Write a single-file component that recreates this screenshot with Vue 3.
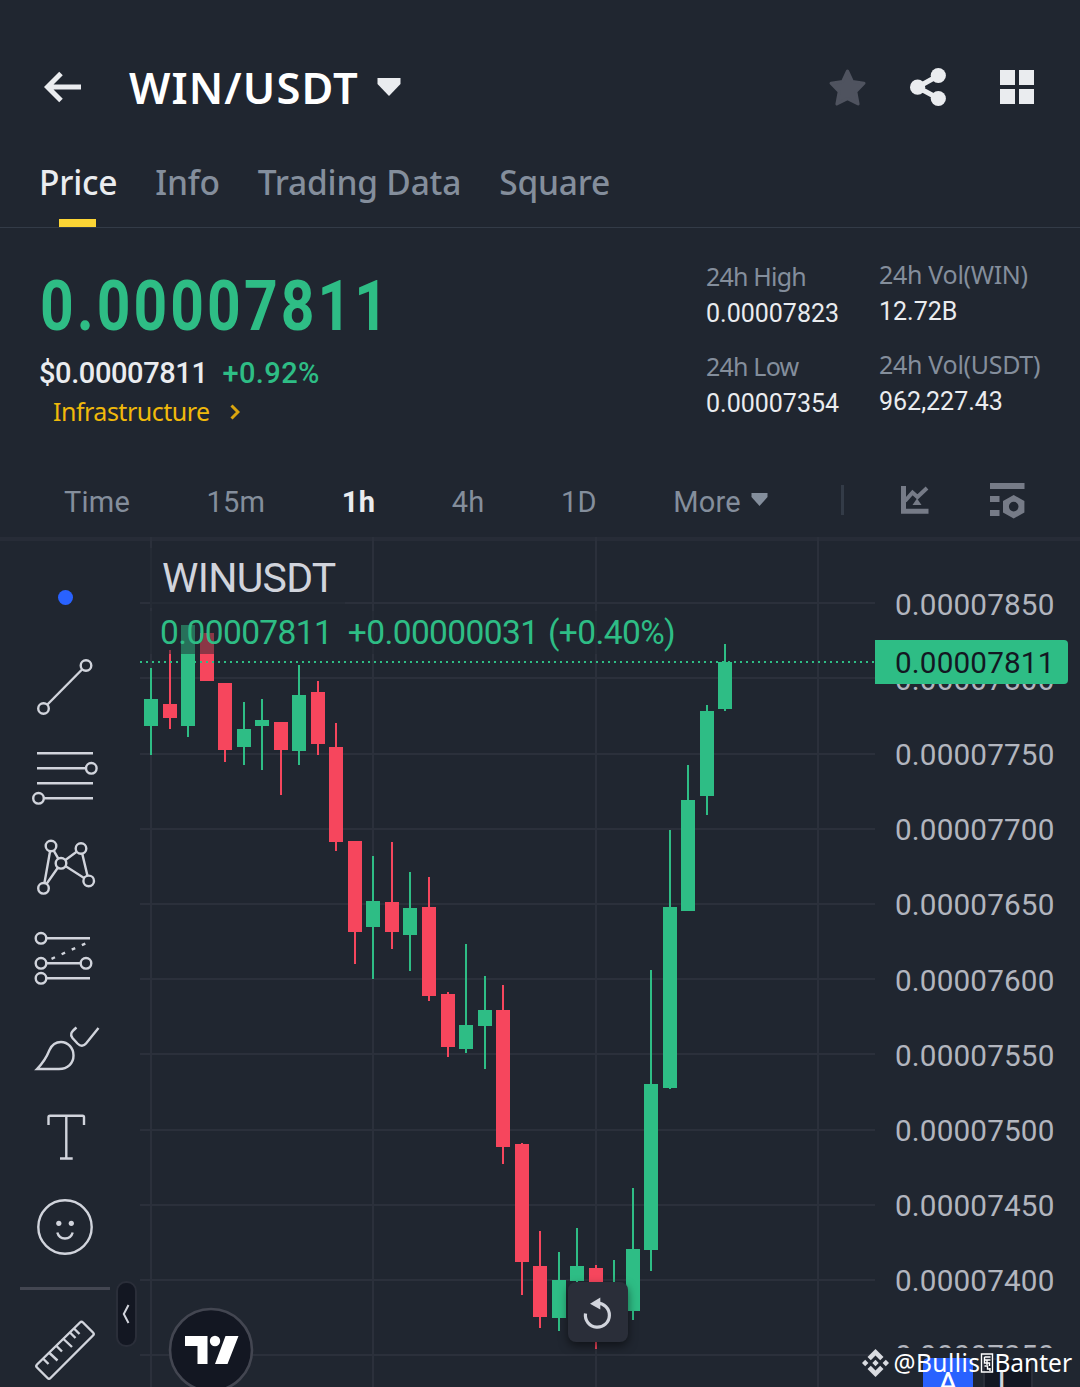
<template>
  <div class="screen">
    <header class="header">
      <svg class="back" width="38" height="32" viewBox="0 0 38 32">
        <path d="M17 2.5L3.5 16L17 29.5M4 16H37" fill="none" stroke="#eaecef" stroke-width="5" />
      </svg>
      <h1 class="pair">WIN/USDT</h1>
      <svg class="pair-caret" width="24" height="18" viewBox="0 0 24 18">
        <path d="M0.5 0H23.5V6L12 18L0.5 6Z" fill="#eaecef" />
      </svg>
      <div class="header-actions">
        <svg width="38" height="40" viewBox="0 0 38 40">
          <path d="M19.5 4L24.5 14.6L36 16.2L27.8 24.6L30.1 37L19.5 31.6L8.9 37L11.2 24.6L3 16.2L14.5 14.6Z" fill="#4f535f" stroke="#4f535f" stroke-width="3" stroke-linejoin="round" />
        </svg>
        <svg width="38" height="40" viewBox="0 0 38 40">
          <path d="M29.5 8.5L8.5 20.2L29.5 31.5" fill="none" stroke="#eaecef" stroke-width="5" />
          <circle cx="29.3" cy="8.5" r="7.6" fill="#eaecef" />
          <circle cx="8.6" cy="20.2" r="7.6" fill="#eaecef" />
          <circle cx="29.3" cy="31.5" r="7.6" fill="#eaecef" />
        </svg>
        <svg width="34" height="34" viewBox="0 0 34 34">
          <path d="M0 0H15V15H0ZM19 0H34V15H19ZM0 19H15V34H0ZM19 19H34V34H19Z" fill="#eaecef" />
        </svg>
      </div>
    </header>

    <nav class="tabs">
      <span v-for="tab in tabs" :key="tab" class="tab" :class="{ active: tab === activeTab }">{{ tab }}</span>
    </nav>

    <section class="summary">
      <div class="price-block">
        <div class="last-price">0.00007811</div>
        <div class="fiat-row">
          <span class="fiat">$0.00007811</span>
          <span class="change">+0.92%</span>
        </div>
        <div class="category">
          <span>Infrastructure</span>
          <svg width="10" height="16" viewBox="0 0 10 16">
            <path d="M1.5 1.5L8 8L1.5 14.5" fill="none" stroke="#dba60e" stroke-width="3" />
          </svg>
        </div>
      </div>
      <div class="stats">
        <div v-for="(column, i) in stats" :key="i" class="stats-column">
          <div v-for="stat in column" :key="stat.label" class="stat">
            <div class="stat-label">{{ stat.label }}</div>
            <div class="stat-value">{{ stat.value }}</div>
          </div>
        </div>
      </div>
    </section>

    <div class="intervals">
      <span v-for="item in intervals" :key="item" class="interval" :class="{ active: item === activeInterval }">{{ item }}</span>
      <span class="interval more">
        More
        <svg width="17" height="13" viewBox="0 0 17 13">
          <path d="M0.5 0H16.5V4L8.5 13L0.5 4Z" fill="#848e9c" />
        </svg>
      </span>
      <span class="separator"></span>
      <svg class="icon-indicator" width="28" height="28" viewBox="0 0 28 28">
        <path d="M2.5 0V25.3H27.5" fill="none" stroke="#767b87" stroke-width="5" />
        <path d="M4 15L11.5 6.5L16.5 11L26 2" fill="none" stroke="#767b87" stroke-width="4" />
        <path d="M16 12.5L20.5 19H11.5Z" fill="#767b87" />
      </svg>
      <svg class="icon-settings" width="35" height="36" viewBox="0 0 35 36">
        <path d="M0 0H34.5V6H0ZM0 13H9.5V19H0ZM0 27H9.5V33H0Z" fill="#767b87" />
        <path fill-rule="evenodd" d="M23.7 12L34.4 18V29.5L23.7 35.5L13 29.5V18ZM23.7 18.8A4.8 4.8 0 1 0 23.7 28.4A4.8 4.8 0 1 0 23.7 18.8Z" fill="#767b87" />
      </svg>
    </div>

    <main class="chart">
      <aside class="toolbar">
        <span class="dot"></span>
        <svg class="tool" viewBox="0 0 90 90">
          <path d="M23.5 66.5L66 23.5" />
          <circle cx="23.5" cy="66.5" r="5.3" />
          <circle cx="66" cy="23.5" r="5.3" />
        </svg>
        <svg class="tool" viewBox="0 0 90 90">
          <path d="M17 21.3H73M17 36.3H73M17 51.3H73M17 66.3H73" />
          <circle cx="71.3" cy="36.3" r="5.3" />
          <circle cx="18.5" cy="66.3" r="5.3" />
        </svg>
        <svg class="tool" viewBox="0 0 90 90">
          <path d="M31 24L23.5 66.3L41 41.3ZM41 41.3L61 26.5L68.7 59Z" />
          <circle cx="31" cy="24" r="5.3" />
          <circle cx="61" cy="26.5" r="5.3" />
          <circle cx="41" cy="41.3" r="5.3" />
          <circle cx="23.5" cy="66.3" r="5.3" />
          <circle cx="68.7" cy="58.9" r="5.3" />
        </svg>
        <svg class="tool" viewBox="0 0 90 90">
          <path d="M21 26.3H70M21 51.3H66M21 66.3H70" />
          <path d="M31.5 46.8L66.5 31" stroke-dasharray="3.8 7.3" />
          <circle cx="21" cy="26.3" r="5.3" />
          <circle cx="21" cy="51.3" r="5.3" />
          <circle cx="66" cy="51.3" r="5.3" />
          <circle cx="21" cy="66.3" r="5.3" />
        </svg>
        <svg class="tool" viewBox="0 0 90 90">
          <path d="M17 67C24 60 27.5 53 29.5 48C32 42.5 35.5 40 41 40C48 40 53.5 46 53.5 53.5C53.5 61 48 67 39 67Z" />
          <path d="M56.5 25.5C50.5 30.5 50 32.5 52.5 36L57.5 41.5C60.5 44.5 63.5 44.5 66 41.5L78.5 26" />
        </svg>
        <svg class="tool" viewBox="0 0 90 90">
          <path d="M28.5 33V25.2Q28.5 23.7 30 23.7H62.5Q64 23.7 64 25.2V33M46.3 23.7V66.5M40 66.5H52.7" />
        </svg>
        <svg class="tool" viewBox="0 0 90 90">
          <circle cx="45" cy="45" r="26.7" />
          <circle class="solid" cx="38.8" cy="41.3" r="2.6" />
          <circle class="solid" cx="51.3" cy="41.3" r="2.6" />
          <path d="M37.3 50.5C39.5 58.5 50.5 58.5 52.7 50.5" />
        </svg>
        <div class="toolbar-divider"></div>
        <svg class="tool" viewBox="0 0 90 90">
          <path d="M60 17.5Q61.5 16 63 17.5L73 27.5Q74.5 29 73 30.5L30.5 73Q29 74.5 27.5 73L17 62.5Q15.5 61 17 59.5Z" stroke-linejoin="round" />
          <path d="M23.5 54L28.5 59M29.5 48L37.5 55.5M36.5 41L42 46.5M43.5 34L52 42M50 27.5L55.5 33M54 23.5L59.5 29" />
        </svg>
        <button class="collapse">
          <svg width="8" height="20" viewBox="0 0 8 20">
            <path d="M6.5 1L1.8 10L6.5 19" fill="none" stroke="#d1d4dc" stroke-width="2" />
          </svg>
        </button>
      </aside>

      <div class="plot">
        <svg class="plot-svg" viewBox="140 541 735 846" width="735" height="846">
          <g stroke="#2b303b" stroke-width="2">
            <line v-for="x in gridX" :key="x" :x1="x" :x2="x" y1="537" y2="1387" />
            <line v-for="label in priceLabels" :key="label.y" x1="140" x2="875" :y1="label.y" :y2="label.y" />
          </g>
          <g v-for="candle in candles" :key="candle.x" :fill="candle.up ? '#2ebd85' : '#f6465d'">
            <rect :x="candle.x - 1" :y="candle.high" width="2" :height="candle.low - candle.high" />
            <rect :x="candle.x - 7" :y="candle.top" width="14" :height="candle.bottom - candle.top" />
          </g>
          <g fill="#202630" fill-opacity="0.5">
            <rect x="150" y="548" width="195" height="60" />
            <rect x="150" y="611" width="534" height="43" />
          </g>
          <line x1="140" x2="875" y1="662" y2="662" stroke="#2ebd85" stroke-width="2" stroke-dasharray="2 4" />
        </svg>
        <div class="legend">
          <div class="symbol">WINUSDT</div>
          <div class="legend-values">
            <span>0.00007811</span>
            <span>+0.00000031</span>
            <span>(+0.40%)</span>
          </div>
        </div>
        <svg class="tv-logo" width="86" height="86" viewBox="0 0 86 86">
          <circle cx="43" cy="43" r="41" fill="#131722" stroke="#434651" stroke-width="2.6" />
          <path d="M17 29H39.5V57H29.5V39H17ZM57.5 29H70.5L59.5 57H47Z" fill="#fff" />
          <circle cx="47" cy="34" r="5.2" fill="#fff" />
        </svg>
        <button class="reset">
          <svg width="60" height="60" viewBox="0 0 60 60">
            <path d="M17.5 31.5A12 12 0 1 0 29 21.2" fill="none" stroke="#d1d4dc" stroke-width="3.2" />
            <path d="M22 21.8L32.3 15.5V27.5Z" fill="#d1d4dc" />
          </svg>
        </button>
      </div>

      <div class="axis">
        <div class="axis-labels">
          <span v-for="label in priceLabels" :key="label.text" class="axis-label">{{ label.text }}</span>
        </div>
        <span class="current-price">0.00007811</span>
        <div class="axis-footer">
          <span class="scale-button auto">A</span>
          <span class="scale-button">L</span>
        </div>
      </div>

      <div class="watermark">
        <svg width="27" height="28" viewBox="0 0 27 28">
          <path d="M13.5 0L21.5 8L18.2 11.3L13.5 6.6L8.8 11.3L5.5 8ZM13.5 28L5.5 20L8.8 16.7L13.5 21.4L18.2 16.7L21.5 20ZM13.5 10.8L16.7 14L13.5 17.2L10.3 14ZM3.2 10.8L6.4 14L3.2 17.2L0 14ZM23.8 10.8L27 14L23.8 17.2L20.6 14Z" fill="#d9dbe0" />
        </svg>
        <span class="handle">@Bullis</span>
        <svg class="missing-glyph" width="14" height="20" viewBox="0 0 14 20">
          <path d="M1.5 1H12.5V19H1.5ZM4.5 4H10.5M4.5 7H10.5M4.5 4V10H9.5V13M4.5 13H7.5V16H10.5M7 7V12M10 15V18" fill="none" stroke="#fff" stroke-width="1.4" />
        </svg>
        <span>Banter</span>
      </div>
    </main>
  </div>
</template>

<script setup>
const tabs = ['Price', 'Info', 'Trading Data', 'Square']
const activeTab = 'Price'

const intervals = ['Time', '15m', '1h', '4h', '1D']
const activeInterval = '1h'

const stats = [
  [
    { label: '24h High', value: '0.00007823' },
    { label: '24h Low', value: '0.00007354' }
  ],
  [
    { label: '24h Vol(WIN)', value: '12.72B' },
    { label: '24h Vol(USDT)', value: '962,227.43' }
  ]
]

const gridX = [151, 373, 596, 818]

const priceLabels = Array.from({ length: 11 }, (_, i) => ({
  text: `0.0000${7850 - i * 50}`,
  y: Math.round(603.3 + i * 75.18)
}))

// x, direction, high, body top, body bottom, low
const candles = [
  [151, 1, 668, 699, 726, 755],
  [170, 0, 650, 704, 718, 729],
  [188, 1, 625, 625, 726, 737],
  [207, 0, 633, 633, 681, 681],
  [225, 0, 683, 683, 750, 762],
  [244, 1, 702, 729, 747, 765],
  [262, 1, 699, 720, 726, 770],
  [281, 0, 722, 722, 750, 795],
  [299, 1, 665, 695, 751, 765],
  [318, 0, 681, 692, 744, 755],
  [336, 0, 723, 747, 842, 851],
  [355, 0, 841, 841, 932, 964],
  [373, 1, 856, 901, 927, 979],
  [392, 0, 842, 902, 932, 949],
  [410, 1, 872, 908, 935, 971],
  [429, 0, 877, 907, 996, 1001],
  [448, 0, 992, 994, 1047, 1057],
  [466, 1, 944, 1025, 1049, 1053],
  [485, 1, 976, 1010, 1026, 1069],
  [503, 0, 985, 1010, 1147, 1164],
  [522, 0, 1143, 1144, 1262, 1295],
  [540, 0, 1231, 1266, 1317, 1328],
  [559, 1, 1252, 1280, 1318, 1331],
  [577, 1, 1228, 1266, 1281, 1283],
  [596, 0, 1265, 1268, 1310, 1349],
  [614, 1, 1260, 1290, 1310, 1320],
  [633, 1, 1188, 1249, 1311, 1320],
  [651, 1, 970, 1084, 1250, 1271],
  [670, 1, 830, 907, 1088, 1089],
  [688, 1, 765, 800, 911, 911],
  [707, 1, 705, 711, 796, 815],
  [725, 1, 644, 662, 709, 711]
].map(([x, up, high, top, bottom, low]) => ({ x, up, high, top, bottom, low }))
</script>

<style>
body {
  background: #202630;
}
</style>

<style scoped>
.screen {
  width: 1080px;
  height: 1387px;
  overflow: hidden;
  background: #202630;
  color: #eaecef;
  font-family: Roboto, "Liberation Sans", sans-serif;
}

svg {
  display: block;
  flex: none;
}

.header {
  display: flex;
  align-items: center;
  height: 96px;
  padding: 39px 46px 0 44px;
}

.pair {
  margin: 0 0 0 47px;
  font-family: "Noto Sans", sans-serif;
  font-size: 43.5px;
  font-weight: 600;
  line-height: 60px;
  letter-spacing: 1.1px;
  color: #fff;
}

.pair-caret {
  margin-left: 18px;
}

.header-actions {
  display: flex;
  align-items: center;
  gap: 43px;
  margin-left: auto;
}

.header-actions svg:last-child {
  margin-left: 10px;
}

.tabs {
  display: flex;
  gap: 38px;
  height: 92px;
  padding-left: 39px;
  border-bottom: 1px solid #333b47;
  font-family: "Noto Sans", sans-serif;
  font-size: 33.5px;
  font-weight: 500;
  line-height: 94px;
  letter-spacing: -0.2px;
  color: #848e9c;
}

.tab {
  position: relative;
}

.tab.active {
  color: #eaecef;
}

.tab.active::after {
  content: "";
  position: absolute;
  left: 20px;
  top: 84px;
  width: 37px;
  height: 8px;
  background: #fcd535;
}

.summary {
  display: flex;
  justify-content: space-between;
  height: 239px;
}

.price-block {
  padding: 38px 0 0 39px;
}

.last-price {
  width: 345px;
  margin-left: 1px;
  font-size: 70px;
  font-weight: 700;
  line-height: 80px;
  letter-spacing: 3.6px;
  white-space: nowrap;
  color: #2ebd85;
  transform: scaleX(0.84);
  transform-origin: left;
}

.fiat-row {
  display: flex;
  gap: 15px;
  margin-top: 7px;
  font-size: 29px;
  font-weight: 500;
  line-height: 40px;
}

.fiat {
  letter-spacing: -0.4px;
}

.change {
  letter-spacing: 0.4px;
  color: #2ebd85;
}

.category {
  display: flex;
  align-items: center;
  gap: 20px;
  padding-left: 14px;
  font-family: "Noto Sans", sans-serif;
  font-size: 25px;
  line-height: 37px;
  letter-spacing: -0.5px;
  color: #f0b90b;
}

.stats {
  display: flex;
  padding-top: 30px;
}

.stats-column {
  display: flex;
  flex-direction: column;
  gap: 18px;
  width: 173px;
}

.stats-column:last-child {
  width: 201px;
  margin-top: -2px;
}

.stat-label {
  font-family: "Noto Sans", sans-serif;
  font-size: 25px;
  line-height: 36px;
  letter-spacing: -0.8px;
  white-space: nowrap;
  color: #848e9c;
}

.stats-column:last-child .stat-label {
  letter-spacing: -0.3px;
}

.stat-value {
  position: relative;
  top: 1.5px;
  font-size: 25px;
  line-height: 36px;
}

.intervals {
  display: flex;
  align-items: center;
  gap: 76.6px;
  height: 70px;
  padding-left: 64px;
  font-size: 29px;
  letter-spacing: 0.2px;
  color: #848e9c;
}

.interval.active {
  font-weight: 700;
  color: #eaecef;
}

.more {
  display: flex;
  gap: 10px;
}

.more svg {
  margin-top: 8px;
}

.separator {
  width: 3px;
  height: 30px;
  margin: -4px 0 0 -3px;
  background: #333b47;
}

.icon-indicator {
  margin: -5px 0 0 -20.5px;
}

.icon-settings {
  margin: -2px 0 0 -15px;
}

.chart {
  position: relative;
  display: flex;
  height: 846px;
  border-top: 4px solid #272c37;
}

.toolbar {
  position: relative;
  width: 120px;
  padding-left: 20px;
}

.dot {
  display: block;
  width: 15px;
  height: 15px;
  margin: 48.5px 0 37.5px 37.5px;
  border-radius: 50%;
  background: #2962ff;
}

.tool {
  width: 90px;
  height: 90px;
  fill: none;
  stroke: #d1d4dc;
  stroke-width: 2.4;
}

.tool circle {
  fill: #202630;
}

.tool .solid {
  fill: #d1d4dc;
  stroke: none;
}

.toolbar-divider {
  width: 90px;
  height: 3px;
  margin: 15px 0;
  background: #434651;
}

.collapse {
  position: absolute;
  left: 116px;
  top: 740px;
  display: flex;
  align-items: center;
  justify-content: center;
  width: 21px;
  height: 66px;
  padding: 0 1px 0 0;
  border: 2px solid #2a2e39;
  border-radius: 10px;
  background: #131722;
}

.plot {
  position: relative;
  width: 735px;
}

.plot-svg {
  overflow: visible;
}

.legend {
  position: absolute;
  left: 21px;
  top: 12px;
  color: #d1d4dc;
}

.symbol {
  padding-left: 1px;
  font-size: 41px;
  line-height: 50px;
  letter-spacing: -0.7px;
}

.legend-values {
  display: flex;
  gap: 15.5px;
  margin: 10px 0 0 -1px;
  font-size: 33.5px;
  line-height: 40px;
  letter-spacing: -0.6px;
  white-space: nowrap;
  color: #2ebd85;
}

.legend-values span:last-child {
  margin-left: -6px;
}

.tv-logo {
  position: absolute;
  left: 28px;
  top: 765.5px;
}

.reset {
  position: absolute;
  left: 428px;
  top: 741px;
  padding: 0;
  border: none;
  border-radius: 8px;
  background: #2a2e39;
  box-shadow: 0 4px 10px rgba(0, 0, 0, 0.5);
}

.axis {
  position: relative;
  width: 205px;
  overflow: hidden;
}

.axis-labels {
  display: flex;
  flex-direction: column;
  padding: 25.75px 0 0 20px;
  font-size: 29.7px;
  letter-spacing: 0.15px;
  color: #b2b5be;
}

.axis-label {
  height: 75.18px;
  line-height: 75.18px;
}

.current-price {
  position: absolute;
  left: 0;
  top: 99px;
  width: 173px;
  height: 44px;
  padding-left: 20px;
  border-radius: 0 4px 4px 0;
  background: #2ebd85;
  font-size: 29.7px;
  line-height: 46px;
  letter-spacing: 0.15px;
  color: #131722;
}

.axis-footer {
  position: absolute;
  left: 0;
  bottom: 0;
  display: flex;
  gap: 10px;
  width: 157px;
  height: 29px;
  padding: 10px 0 0 48px;
  background: #202630;
}

.scale-button {
  width: 46px;
  height: 50px;
  border: 2px solid #2a2e39;
  border-radius: 5px;
  background: #131722;
  font-size: 32px;
  line-height: 46px;
  text-indent: -4px;
  text-align: center;
  color: #d1d4dc;
}

.scale-button.auto {
  border-color: #2962ff;
  background: #2962ff;
  text-indent: 0;
  color: #fff;
}

.watermark {
  position: absolute;
  right: 8px;
  bottom: 7px;
  display: flex;
  align-items: center;
  font-family: "Noto Sans", sans-serif;
  font-size: 24.5px;
  line-height: 34px;
  color: #fff;
}

.watermark > svg:first-child {
  margin-right: 4px;
}

.handle {
  letter-spacing: 0.45px;
}
</style>
